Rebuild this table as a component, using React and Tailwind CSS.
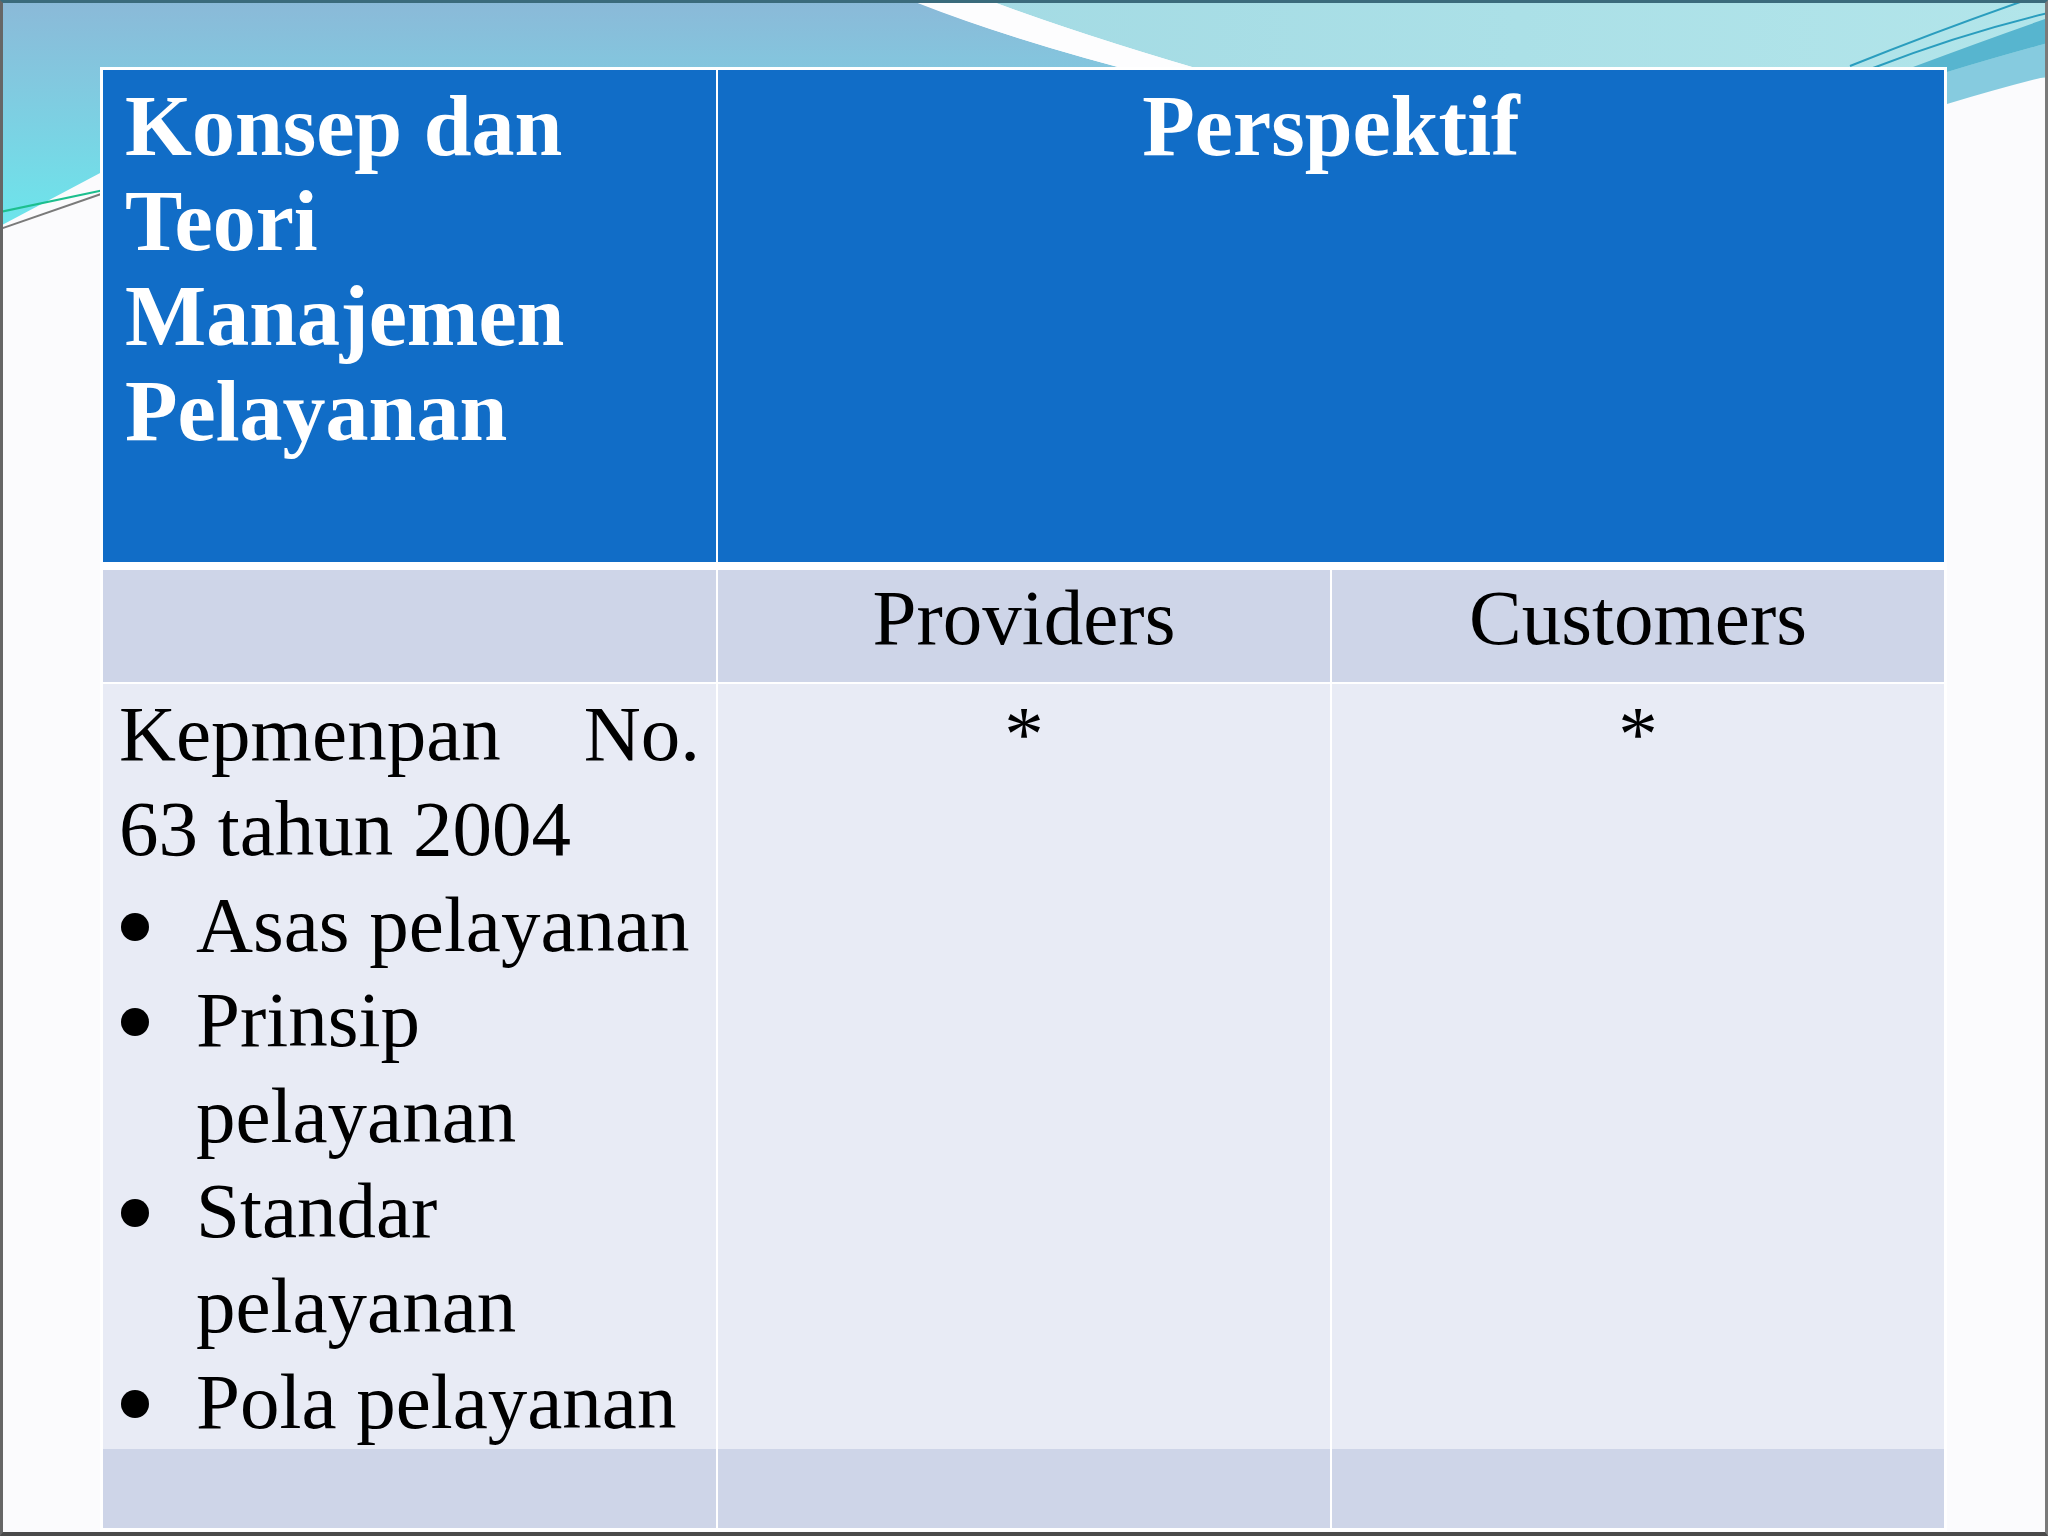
import React from 'react';

const Backdrop = () => (
  <svg
    className="absolute top-[-3px] left-[-3px] w-[2048px] h-[1536px]"
    viewBox="0 0 2048 1536"
    xmlns="http://www.w3.org/2000/svg"
  >
    <defs>
      <linearGradient id="bandL" x1="0" y1="0" x2="0" y2="228" gradientUnits="userSpaceOnUse">
        <stop offset="0" stopColor="#8bb9d8" />
        <stop offset="0.35" stopColor="#82c8df" />
        <stop offset="1" stopColor="#6ce6ec" />
      </linearGradient>
      <linearGradient id="bandR" x1="988" y1="0" x2="2048" y2="0" gradientUnits="userSpaceOnUse">
        <stop offset="0" stopColor="#a4dbe4" />
        <stop offset="1" stopColor="#b2e5ea" />
      </linearGradient>
    </defs>
    <rect width="2048" height="1536" fill="#fbfbfd" />
    {/* left band, bounded by the swoosh */}
    <path d="M0 0 H912 Q1010 40 1160 78 L1160 100 L102 172 L0 226 Z" fill="url(#bandL)" />
    {/* right of the swoosh */}
    <path d="M988 0 Q1090 38 1230 78 L2048 78 V0 Z" fill="url(#bandR)" />
    {/* white swoosh */}
    <path d="M910 0 Q1010 40 1160 78 L1230 78 Q1090 38 988 0 Z" fill="#fdfdfe" />
    {/* right corner waves */}
    <path d="M1947 72 Q2000 56 2048 43 V76 Q2000 88 1947 104 Z" fill="#86cbdf" />
    <path d="M1913 67 Q1985 40 2048 18 V43 Q2000 56 1947 72 Z" fill="#57b5cf" />
    <path d="M1850 66 Q1940 30 2026 0" stroke="#2a9dbe" strokeWidth="2" fill="none" />
    <path d="M1873 68 Q1960 34 2048 13" stroke="#2a9dbe" strokeWidth="2" fill="none" />
    {/* left thin lines */}
    <path d="M0 212 L104 190" stroke="#1dbf8e" strokeWidth="2" fill="none" />
    <path d="M0 229 L104 193" stroke="#7a7a7a" strokeWidth="2" fill="none" />
  </svg>
);

const Bullet = ({ children }) => (
  <div className="flex">
    <span className="w-[77px] shrink-0">
      <span className="inline-block w-[28px] h-[28px] ml-[2px] rounded-full bg-black align-[10px]" />
    </span>
    <span className="flex-1">{children}</span>
  </div>
);

export default function App() {
  return (
    <div className="relative w-[2048px] h-[1536px] overflow-hidden bg-[#fbfbfd] border-t-[3px] border-t-[#3b6b7c] border-l-[3px] border-l-[#666666] border-r-[3px] border-r-[#7a7a7a] border-b-[4px] border-b-[#4a4a4a] font-['Liberation_Serif','Times_New_Roman',serif]">
      <Backdrop />
      <div className="relative ml-[97px] mt-[64px] w-[1847px] bg-white p-[3px] flex flex-col">
        {/* header */}
        <div className="grid grid-cols-[613px_1226px] gap-x-[2px] h-[492px] text-white font-bold text-[86px] leading-[95px]">
          <div className="bg-[#116dc7] pl-[22px] pt-[9px]">
            <div>Konsep dan</div>
            <div>Teori</div>
            <div>Manajemen</div>
            <div>Pelayanan</div>
          </div>
          <div className="bg-[#116dc7] pt-[9px] text-center">Perspektif</div>
        </div>

        {/* sub header */}
        <div className="mt-[8px] grid grid-cols-[613px_612px_612px] gap-x-[2px] h-[112px] text-black text-[79px] leading-[95px]">
          <div className="bg-[#ced5e8]" />
          <div className="bg-[#ced5e8] text-center">Providers</div>
          <div className="bg-[#ced5e8] text-center">Customers</div>
        </div>

        {/* body */}
        <div className="mt-[2px] grid grid-cols-[613px_612px_612px] gap-x-[2px] h-[762px] text-black text-[79px] leading-[95.4px]">
          <div className="bg-[#e8ebf5] px-[16px] pt-[2px]">
            <p className="text-justify">Kepmenpan No. 63 tahun 2004</p>
            <Bullet>Asas pelayanan</Bullet>
            <Bullet>Prinsip pelayanan</Bullet>
            <Bullet>Standar pelayanan</Bullet>
            <Bullet>Pola pelayanan</Bullet>
          </div>
          <div className="bg-[#e8ebf5] pt-[2px] text-center">*</div>
          <div className="bg-[#e8ebf5] pt-[2px] text-center">*</div>
        </div>

        {/* footer row */}
        <div className="mt-[3px] grid grid-cols-[613px_612px_612px] gap-x-[2px] h-[79px]">
          <div className="bg-[#ced5e8]" />
          <div className="bg-[#ced5e8]" />
          <div className="bg-[#ced5e8]" />
        </div>
      </div>
    </div>
  );
}
